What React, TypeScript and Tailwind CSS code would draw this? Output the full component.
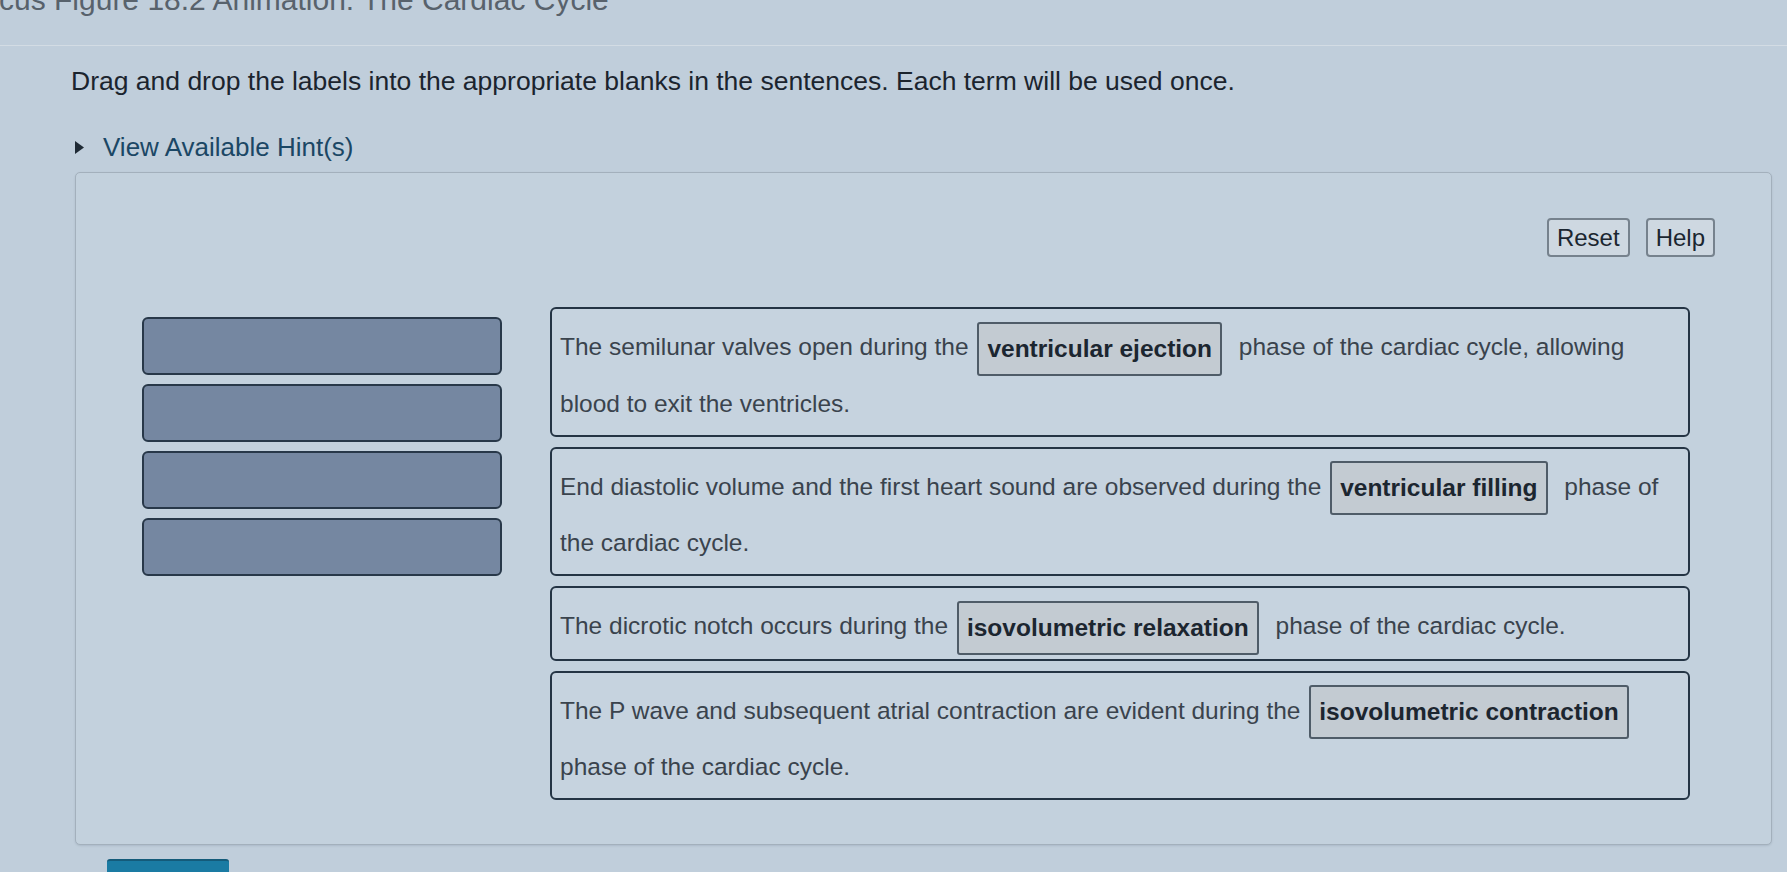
import React from 'react'

const font = { fontFamily: '"Liberation Sans", Arial, Helvetica, sans-serif' }

function Blank({ children }: { children: React.ReactNode }) {
  return (
    <span className="ml-[2px] mr-[10px] inline-block h-[54px] rounded-[3px] border-2 border-[#4f5c68] bg-[#c3cbd2] px-[8px] align-middle text-[24.5px] font-bold leading-[50px] text-[#1c2630]">
      {children}
    </span>
  )
}

function Sentence({ children }: { children: React.ReactNode }) {
  return (
    <div className="rounded-[6px] border-2 border-[#243444] bg-[#c6d3df] pb-[4px] pl-[8px] pr-[8px] pt-[10px] text-[24.5px] leading-[55px] text-[#3a434d]">
      {children}
    </div>
  )
}

export default function App() {
  return (
    <div className="h-[872px] w-full overflow-hidden bg-[#c0cedb]" style={font}>
      {/* title, cut off by the top of the screen */}
      <div className="h-[18px] overflow-hidden">
        <div className="-ml-[1px] -mt-[15px] whitespace-nowrap text-[30px] leading-[30px] text-[#58626c]">
          cus Figure 18.2 Animation: The Cardiac Cycle
        </div>
      </div>
      <div className="mt-[27px] h-px bg-[#d3dce4]" />

      <p className="mt-[19px] pl-[71px] text-[26.5px] leading-[32px] text-[#1b242e]">
        Drag and drop the labels into the appropriate blanks in the sentences. Each term will be used once.
      </p>

      <div className="mt-[34px] flex items-center pl-[75px] text-[26px] leading-[32px] text-[#1b4765]">
        <svg width="9" height="13" viewBox="0 0 9 13" className="mr-[19px]">
          <path d="M0 0 L9 6.5 L0 13 Z" fill="#1f2a35" />
        </svg>
        View Available Hint(s)
      </div>

      {/* activity panel */}
      <div className="ml-[75px] mt-[9px] h-[673px] w-[1697px] rounded-[5px] border border-[#a3b0bc] bg-[#c3d1dd] shadow-[0_1px_2px_rgba(60,80,100,0.15)]">
        <div className="flex justify-end gap-[16px] pr-[56px] pt-[45px]">
          <button className="h-[39px] rounded-[4px] border-2 border-[#76828d] bg-[#ced8e1] px-[8px] text-[24px] leading-[33px] text-[#1b2630]">
            Reset
          </button>
          <button className="h-[39px] rounded-[4px] border-2 border-[#76828d] bg-[#ced8e1] px-[8px] text-[24px] leading-[33px] text-[#1b2630]">
            Help
          </button>
        </div>

        <div className="mt-[50px] flex pl-[66px]">
          <div className="mt-[10px] flex w-[360px] flex-col gap-[9px]">
            {[0, 1, 2, 3].map((i) => (
              <div key={i} className="h-[58px] rounded-[6px] border-2 border-[#283849] bg-[#7587a1]" />
            ))}
          </div>

          <div className="ml-[48px] flex w-[1140px] flex-col gap-[10px]">
            <Sentence>
              The semilunar valves open during the <Blank>ventricular ejection</Blank> phase of the cardiac cycle, allowing
              <br />
              blood to exit the ventricles.
            </Sentence>
            <Sentence>
              End diastolic volume and the first heart sound are observed during the <Blank>ventricular filling</Blank> phase of
              <br />
              the cardiac cycle.
            </Sentence>
            <Sentence>
              The dicrotic notch occurs during the <Blank>isovolumetric relaxation</Blank> phase of the cardiac cycle.
            </Sentence>
            <Sentence>
              The P wave and subsequent atrial contraction are evident during the <Blank>isovolumetric contraction</Blank>
              <br />
              phase of the cardiac cycle.
            </Sentence>
          </div>
        </div>
      </div>

      <div className="ml-[107px] mt-[14px] h-[20px] w-[122px] rounded-t-[3px] border-t-2 border-[#145b7a] bg-[#1a7ba3]" />
    </div>
  )
}
